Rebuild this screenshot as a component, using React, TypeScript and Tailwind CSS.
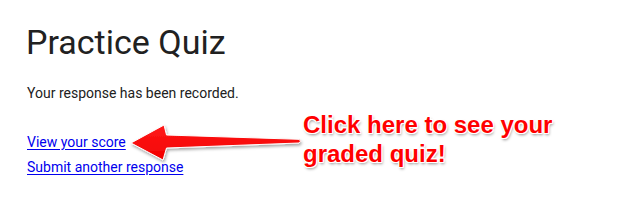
import React from "react";

export default function App() {
  return (
    <div className="relative w-[624px] h-[202px] bg-white overflow-hidden font-['Roboto',sans-serif]">
      <div className="flex flex-col pl-[27px] pt-[22px]">
        <h1 className="text-[34px] leading-[40px] font-normal text-[#212121] -ml-[1px]">Practice Quiz</h1>
        <p className="mt-[21px] text-[14px] leading-[20px] text-[#212121]">Your response has been recorded.</p>
        <div className="mt-[29px] flex flex-col gap-[5px] items-start">
          <a href="#" className="text-[14px] leading-[20px] text-[#0000ee] underline underline-offset-[2px]">View your score</a>
          <a href="#" className="text-[14px] leading-[20px] text-[#0000ee] underline underline-offset-[2px]">Submit another response</a>
        </div>
      </div>

      <svg
        className="absolute left-0 top-0"
        width="624"
        height="202"
        viewBox="0 0 624 202"
      >
        <defs>
          <filter id="sh" x="-10%" y="-30%" width="120%" height="160%">
            <feDropShadow dx="1" dy="2" stdDeviation="1.5" floodColor="#000" floodOpacity="0.35" />
          </filter>
          <linearGradient id="rg" x1="0" y1="0" x2="0" y2="1">
            <stop offset="0" stopColor="#ff1a1a" />
            <stop offset="1" stopColor="#f20000" />
          </linearGradient>
        </defs>
        <path
          d="M131 143 L164 125 L166.5 135 L299 139.3 Q302 141.2 299 143 L166.5 148 L163 160 Z"
          fill="url(#rg)"
          stroke="#fff"
          strokeWidth="1"
          strokeLinejoin="round"
          filter="url(#sh)"
        />
      </svg>

      <div className="absolute left-[303px] top-[110px] font-['Liberation_Sans',Arial,sans-serif] font-bold text-[24px] leading-[29px] text-[#ff0000] [text-shadow:1px_0_0_#fff,-1px_0_0_#fff,0_1px_0_#fff,0_-1px_0_#fff,1px_1px_0_#fff,-1px_-1px_0_#fff,1px_-1px_0_#fff,-1px_1px_0_#fff,1px_2px_3px_rgba(0,0,0,0.45)]">
        <div>Click here to see your</div>
        <div>graded quiz!</div>
      </div>
    </div>
  );
}
